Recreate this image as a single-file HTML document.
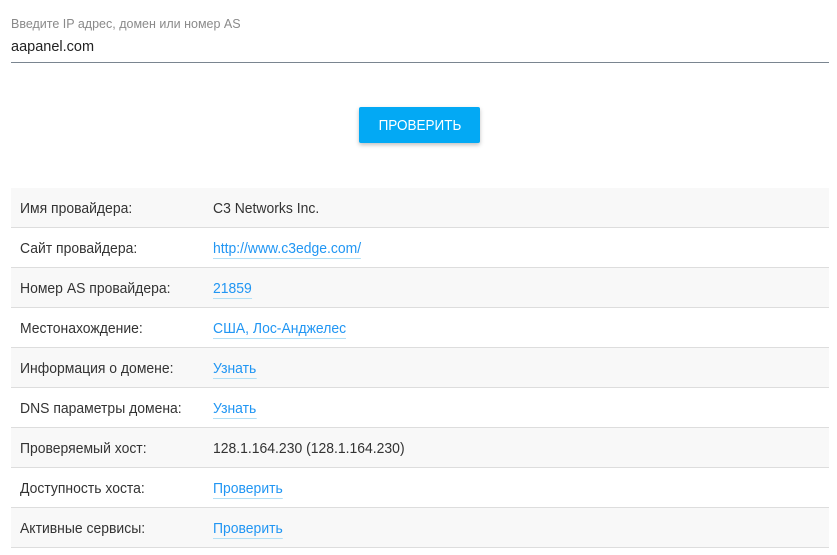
<!DOCTYPE html>
<html><head><meta charset="utf-8"><style>
body{margin:0;background:#fff;font-family:"Liberation Sans",sans-serif;color:#333;}
.lbl{position:absolute;left:11px;top:17px;font-size:12.5px;color:#8a8a8a;}
.inp{position:absolute;left:11px;top:39px;font-size:14.5px;color:#222;}
.line{position:absolute;left:11px;top:62px;width:818px;height:1px;background:#7a8590;}
.btn{position:absolute;left:359px;top:107px;width:121px;height:36px;background:#03a9f4;color:#fff;border-radius:2px;font-size:15px;line-height:37px;text-align:center;box-shadow:0 2px 4px rgba(0,0,0,.25);}
.btn span{display:inline-block;transform:scaleX(0.9);}
table{position:absolute;left:11px;top:188px;width:818px;border-collapse:collapse;font-size:15px;table-layout:fixed;}
td{height:37px;border-bottom:1px solid #ddd;padding:2px 0 0 0;vertical-align:middle;}
tr:nth-child(odd){background:#f8f8f8;}
td.k{padding-left:9px;width:193px;color:#333;}
td span{display:inline-block;transform:scaleX(0.93);transform-origin:left;white-space:nowrap;}
a{color:#2196f3;text-decoration:none;border-bottom:1px solid #b3e0f5;padding-bottom:1px;}
</style></head><body>
<div class="lbl">Введите IP адрес, домен или номер AS</div>
<div class="inp">aapanel.com</div>
<div class="line"></div>
<div class="btn"><span>ПРОВЕРИТЬ</span></div>
<table>
<tr><td class="k"><span>Имя провайдера:</span></td><td><span>C3 Networks Inc.</span></td></tr>
<tr><td class="k"><span>Сайт провайдера:</span></td><td><span><a>http://www.c3edge.com/</a></span></td></tr>
<tr><td class="k"><span>Номер AS провайдера:</span></td><td><span><a>21859</a></span></td></tr>
<tr><td class="k"><span>Местонахождение:</span></td><td><span><a>США, Лос-Анджелес</a></span></td></tr>
<tr><td class="k"><span>Информация о домене:</span></td><td><span><a>Узнать</a></span></td></tr>
<tr><td class="k"><span>DNS параметры домена:</span></td><td><span><a>Узнать</a></span></td></tr>
<tr><td class="k"><span>Проверяемый хост:</span></td><td><span>128.1.164.230 (128.1.164.230)</span></td></tr>
<tr><td class="k"><span>Доступность хоста:</span></td><td><span><a>Проверить</a></span></td></tr>
<tr><td class="k"><span>Активные сервисы:</span></td><td><span><a>Проверить</a></span></td></tr>
</table>
</body></html>
